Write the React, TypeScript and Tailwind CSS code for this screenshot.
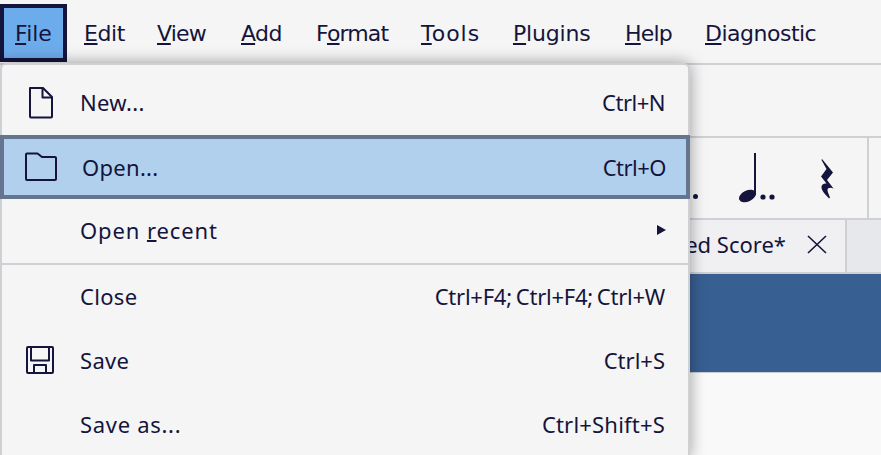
const topMenus = [
  { pre: '', key: 'E', rest: 'dit', w: 'w-[73px]', track: 'tracking-[-0.4px]' },
  { pre: '', key: 'V', rest: 'iew', w: 'w-[84px]', track: 'tracking-[-0.8px]' },
  { pre: '', key: 'A', rest: 'dd', w: 'w-[75px]', track: 'tracking-[-0.6px]' },
  { pre: 'F', key: 'o', rest: 'rmat', w: 'w-[105px]', track: 'tracking-[-0.9px]' },
  { pre: '', key: 'T', rest: 'ools', w: 'w-[92px]', track: 'tracking-[1px]' },
  { pre: '', key: 'P', rest: 'lugins', w: 'w-[112px]', track: 'tracking-[-0.2px]' },
  { pre: '', key: 'H', rest: 'elp', w: 'w-[80px]', track: 'tracking-[-0.8px]' },
  { pre: '', key: 'D', rest: 'iagnostic', w: 'w-[130px]', track: 'tracking-[-0.5px]' },
]

function Underlined({ pre = '', k, rest, offset = 'underline-offset-[2px]' }: { pre?: string; k: string; rest: string; offset?: string }) {
  return (
    <span>
      {pre}
      <span className={`underline decoration-2 ${offset} [text-decoration-skip-ink:none]`}>{k}</span>
      {rest}
    </span>
  )
}

function NewIcon() {
  return (
    <svg width="26" height="33" viewBox="0 0 26 33" fill="none" stroke="#14143c" strokeWidth="2" strokeLinejoin="round">
      <path d="M2 2h13l9 9v19.500a1 1 0 0 1-1 1H3a1 1 0 0 1-1-1z" />
      <path d="M14.500 2v9.500H24" />
    </svg>
  )
}

function FolderIcon() {
  return (
    <svg width="34" height="30" viewBox="0 0 34 30" fill="none" stroke="#14143c" strokeWidth="2" strokeLinejoin="round">
      <path d="M2 2.500a1 1 0 0 1 1-1h10.500l4.500 3.500h13a1 1 0 0 1 1 1v21a1 1 0 0 1-1 1H3a1 1 0 0 1-1-1z" />
    </svg>
  )
}

function SaveIcon() {
  return (
    <svg width="28" height="28" viewBox="0 0 28 28" fill="none" stroke="#14143c" strokeWidth="2" strokeLinejoin="round">
      <rect x="1" y="1" width="26" height="26" rx="1" />
      <path d="M5 1v13.500h18V1M8 27v-8h12v8" />
    </svg>
  )
}

function DottedNote() {
  return (
    <svg width="42" height="54" viewBox="0 0 42 54" fill="#14143c">
      <rect x="15" y="0" width="2" height="42" />
      <ellipse cx="8.500" cy="43" rx="9" ry="5.500" transform="rotate(-25 8.500 43)" />
      <circle cx="24" cy="44" r="2.600" />
      <circle cx="33" cy="44" r="2.600" />
    </svg>
  )
}

function Rest() {
  return (
    <svg width="14" height="40" viewBox="0 0 14 40" fill="#14143c">
      <path d="M2 0l11 13.500-6 7.500 6.500 8.500c-3-1.500-6-1-6 1.500 0 2 1.500 5 2.500 7.500l-1 1C5 35 1 31 1.500 27.500 2 25 4.500 24 6.500 24.500L1 17.500 6.500 10 1.500 1z" />
    </svg>
  )
}

function MenuRow({ icon, label, shortcut, active, arrow, keyClass = '' }: { icon?: React.ReactNode; label: React.ReactNode; shortcut?: string; active?: boolean; arrow?: boolean; keyClass?: string }) {
  return (
    <div className={`flex h-[64px] items-center ${active ? 'mx-[-2px] border-4 border-[#65748f] bg-[#b0d0ee] pl-[19px] pr-[20px]' : 'pb-[2px] pl-[20px] pr-[23px]'}`}>
      <div className="flex w-[58px] shrink-0 items-center">{icon}</div>
      <div className={`flex-1 tracking-[0.3px] ${active ? 'pl-[1px]' : ''}`}>{label}</div>
      {shortcut && <div className={keyClass}>{shortcut}</div>}
      {arrow && <div className="mr-[-1px] h-0 w-0 border-y-[5px] border-l-[9px] border-y-transparent border-l-[#14143c]" />}
    </div>
  )
}

export default function App() {
  return (
    <div className="relative h-[455px] w-[881px] overflow-hidden bg-[#f5f5f5] font-['Noto_Sans',sans-serif] text-[#14143c]">
      {/* Menu bar */}
      <div className="flex h-[65px] items-start border-b-2 border-[#cfd0d3] pt-[4px] font-['DejaVu_Sans',sans-serif] text-[22px]">
        <div className="mr-[17px] flex h-[58px] w-[67px] items-center justify-center border-4 border-[#14143c] bg-[#6dacec]">
          <Underlined k="F" rest="ile" />
        </div>
        {topMenus.map((m) => (
          <div key={m.key} className={`${m.w} ${m.track} flex h-[58px] shrink-0 items-center`}>
            <Underlined pre={m.pre} k={m.key} rest={m.rest} />
          </div>
        ))}
      </div>

      {/* Toolbars */}
      <div className="h-[73px] border-b-2 border-[#cfd0d3]" />
      <div className="flex h-[82px] justify-end border-b-2 border-[#cfd0d3]">
        <div className="flex w-[179px] items-start border-r-2 border-[#cfd0d3] pl-[2px] pt-[15px]">
          <div className="ml-[1px] mt-[41px] h-[5px] w-[5px] rounded-full bg-[#14143c]" />
          <div className="ml-[41px]"><DottedNote /></div>
          <div className="ml-[39px] mt-[6px]"><Rest /></div>
        </div>
        <div className="w-[12px]" />
      </div>

      {/* Tabs */}
      <div className="flex h-[54px] border-b-2 border-[#cfd0d3] bg-[#e6e8eb]">
        <div className="flex w-[847px] items-center justify-end gap-[21px] border-r-2 border-[#cfd0d3] bg-[#f0f0f3] pb-[3px] pr-[18px] text-[22px]">
          <span>Untitled Score*</span>
          <svg width="20" height="19" viewBox="0 0 20 19" stroke="#14143c" strokeWidth="1.6"><path d="M1 1l18 17M19 1L1 18" /></svg>
        </div>
      </div>

      {/* Score header */}
      <div className="h-[98px] bg-[#385f92]" />
      <div className="h-[84px] border-t border-[#c9cdd3] bg-[#f9f9f9]" />

      {/* File menu */}
      <div className="absolute left-0 top-[63px] w-[690px] rounded-t-[6px] border-x-2 border-t-2 border-[#cfd0d3] bg-[#f5f5f5] text-[22px] shadow-[0_0_16px_rgba(0,0,0,0.38)]">
        <div className="h-[6px]" />
        <MenuRow icon={<div className="pl-[6px]"><NewIcon /></div>} label="New..." shortcut="Ctrl+N" keyClass="tracking-[-0.5px]" />
        <MenuRow active icon={<div className="pl-[1px]"><FolderIcon /></div>} label="Open..." shortcut="Ctrl+O" keyClass="tracking-[-0.5px]" />
        <MenuRow label={<span className="tracking-[0.9px]"><Underlined pre="Open " k="r" rest="ecent" offset="underline-offset-[1px]" /></span>} arrow />
        <div className="h-[2px] bg-[#cfd0d3]" />
        <MenuRow label="Close" shortcut="Ctrl+F4; Ctrl+F4; Ctrl+W" keyClass="tracking-[-0.25px] [word-spacing:-1.5px]" />
        <MenuRow icon={<div className="pl-[4px]"><SaveIcon /></div>} label="Save" shortcut="Ctrl+S" />
        <MenuRow label={<span className="tracking-[0.7px]">Save as...</span>} shortcut="Ctrl+Shift+S" keyClass="tracking-[0.2px]" />
      </div>
    </div>
  )
}
